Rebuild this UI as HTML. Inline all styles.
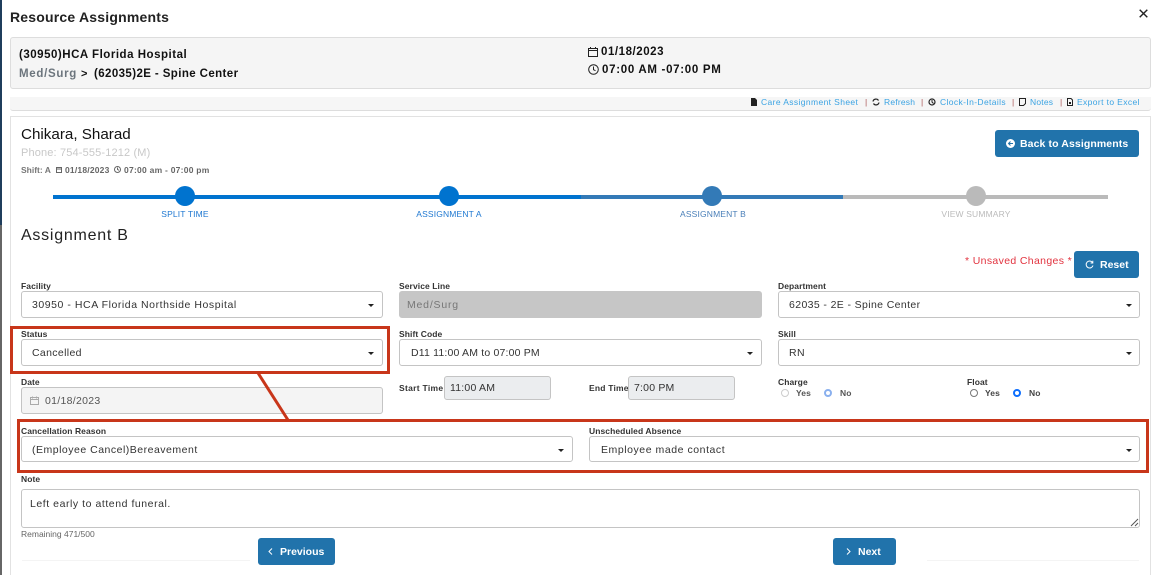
<!DOCTYPE html>
<html><head><meta charset="utf-8"><style>
html,body{margin:0;padding:0;width:1156px;height:575px;overflow:hidden;background:#fff}
body{position:relative;font-family:"Liberation Sans",sans-serif;color:#212529}
.a{position:absolute;box-sizing:border-box}
.t{position:absolute;white-space:nowrap;line-height:14px;height:14px}
.lb{font-size:8.5px;font-weight:700;color:#333;letter-spacing:.08px}
.in{position:absolute;box-sizing:border-box;border:1px solid #c4c4c4;border-radius:3px;background:#fff}
.v{font-size:10.5px;color:#333;letter-spacing:.45px}
.car{position:absolute;width:0;height:0;border-left:3px solid transparent;border-right:3px solid transparent;border-top:3px solid #222}
.btn{position:absolute;box-sizing:border-box;background:#2173ab;border-radius:3px;color:#fff;font-weight:700;font-size:10.5px;line-height:28px;white-space:nowrap}
.lk{color:#3aa3e3;font-size:8.5px;letter-spacing:.38px}
.sep{color:#a55;font-size:8.5px}
.st{font-size:8.5px;text-align:center;width:120px;letter-spacing:.15px}
.dot{position:absolute;width:20px;height:20px;border-radius:50%;top:186px}
.r{position:absolute;box-sizing:border-box;border:3px solid #c8361a}
.rd{position:absolute;box-sizing:border-box;width:8px;height:8px;border-radius:50%}
</style></head><body>
<div class="a" style="left:0;top:0;width:2px;height:225px;background:#1f3d5c"></div>
<div class="a" style="left:0;top:225px;width:2px;height:350px;background:#666"></div>

<div class="t" style="left:10px;top:10px;font-size:14px;font-weight:700;letter-spacing:.2px;color:#222">Resource Assignments</div>
<svg class="a" style="left:1139px;top:9px" width="9" height="9" viewBox="0 0 9 9"><path d="M.7.7L8.300 8.300M8.300.7L.7 8.300" stroke="#222" stroke-width="1.400" fill="none"/></svg>

<div class="a" style="left:10px;top:37px;width:1141px;height:52px;background:#f5f5f5;border:1px solid #ddd;border-radius:3px"></div>
<div class="t" style="left:19px;top:48px;font-size:11.500px;font-weight:700;letter-spacing:.52px;color:#111">(30950)HCA Florida Hospital</div>
<div class="t" style="left:19px;top:67px;font-size:11.500px;font-weight:700;letter-spacing:.7px;color:#6c757d">Med/Surg</div>
<div class="t" style="left:81px;top:67px;font-size:11px;font-weight:700;color:#111">&gt;</div>
<div class="t" style="left:94px;top:67px;font-size:11.500px;font-weight:700;letter-spacing:.4px;color:#111">(62035)2E - Spine Center</div>
<svg class="a" style="left:588px;top:46px" width="10" height="11" viewBox="0 0 10 11"><path d="M.5 2.500h9v8h-9zM.5 4.500h9M2.500 1v2M7.500 1v2" stroke="#222" stroke-width="1" fill="none"/></svg>
<div class="t" style="left:601px;top:45px;font-size:11.500px;font-weight:700;letter-spacing:.55px;color:#111">01/18/2023</div>
<svg class="a" style="left:588px;top:64px" width="11" height="11" viewBox="0 0 11 11"><circle cx="5.500" cy="5.500" r="4.800" stroke="#222" fill="none"/><path d="M5.500 2.500v3.200l2 1" stroke="#222" fill="none"/></svg>
<div class="t" style="left:602px;top:63px;font-size:11.500px;font-weight:700;letter-spacing:.7px;color:#111">07:00 AM -07:00 PM</div>

<div class="a" style="left:10px;top:97px;width:1141px;height:14px;background:#f6f6f6;border-bottom:1px solid #ddd;border-radius:0 0 3px 3px"></div>
<svg class="a" style="left:751px;top:98px" width="6" height="8" viewBox="0 0 6 8"><path d="M0 0h4l2 2v6H0z" fill="#222"/></svg>
<div class="t lk" style="left:761px;top:95px">Care Assignment Sheet</div><div class="t sep" style="left:865px;top:95px">|</div>
<svg class="a" style="left:872px;top:98px" width="8" height="8" viewBox="0 0 8 8"><path d="M1 3.500A3 3 0 0 1 6.500 2.500M7 4.500A3 3 0 0 1 1.500 5.500" stroke="#222" stroke-width="1.200" fill="none"/></svg>
<div class="t lk" style="left:884px;top:95px;letter-spacing:.2px">Refresh</div><div class="t sep" style="left:921px;top:95px">|</div>
<svg class="a" style="left:928px;top:98px" width="8" height="8" viewBox="0 0 8 8"><circle cx="4" cy="4" r="3" stroke="#222" stroke-width="1.200" fill="none"/><path d="M4 2v2l1.500 1.500" stroke="#222" fill="none"/></svg>
<div class="t lk" style="left:940px;top:95px">Clock-In-Details</div><div class="t sep" style="left:1012px;top:95px">|</div>
<svg class="a" style="left:1019px;top:98px" width="7" height="8" viewBox="0 0 7 8"><path d="M.5.5h6v5l-2 2h-4z" stroke="#222" fill="none"/></svg>
<div class="t lk" style="left:1030px;top:95px;letter-spacing:.2px">Notes</div><div class="t sep" style="left:1060px;top:95px">|</div>
<svg class="a" style="left:1067px;top:98px" width="6" height="8" viewBox="0 0 6 8"><path d="M.5.5h3.500l1.500 1.500v5.500h-5z" stroke="#222" fill="none"/><path d="M2 4h2v2H2z" fill="#222"/></svg>
<div class="t lk" style="left:1077px;top:95px">Export to Excel</div>

<div class="a" style="left:10px;top:116px;width:1141px;height:470px;background:#fff;border:1px solid #e2e2e2"></div>

<div class="t" style="left:21px;top:128px;font-size:15.200px;color:#111">Chikara, Sharad</div>
<div class="t" style="left:21px;top:146px;font-size:11px;color:#c8c8c8;letter-spacing:.15px">Phone: 754-555-1212 (M)</div>
<div class="t" style="left:21px;top:163px;font-size:8.500px;font-weight:700;color:#777">Shift: A</div>
<svg class="a" style="left:56px;top:166px" width="6" height="7" viewBox="0 0 6 7"><path d="M.5 1.500h5v5h-5zM.5 3h5" stroke="#666" fill="none"/></svg>
<div class="t" style="left:65px;top:163px;font-size:8.500px;font-weight:700;color:#666;letter-spacing:.2px">01/18/2023</div>
<svg class="a" style="left:114px;top:166px" width="7" height="7" viewBox="0 0 7 7"><circle cx="3.500" cy="3.500" r="3" stroke="#666" fill="none"/><path d="M3.500 1.500v2l1.500.8" stroke="#666" fill="none"/></svg>
<div class="t" style="left:124px;top:163px;font-size:8.500px;font-weight:700;color:#666;letter-spacing:.25px">07:00 am - 07:00 pm</div>

<div class="btn" style="left:995px;top:130px;width:144px;height:27px;padding-left:25px;letter-spacing:.1px">Back to Assignments</div>
<svg class="a" style="left:1006px;top:139px" width="9" height="9" viewBox="0 0 9 9"><circle cx="4.500" cy="4.500" r="4.500" fill="#fff"/><path d="M7 4.500H2.500M4.500 2.500l-2 2 2 2" stroke="#2173ab" fill="none"/></svg>

<div class="a" style="left:53px;top:195px;width:528px;height:4px;background:#0073cf"></div>
<div class="a" style="left:581px;top:195px;width:262px;height:4px;background:#337ab7"></div>
<div class="a" style="left:843px;top:195px;width:265px;height:4px;background:#bababa"></div>
<div class="dot" style="left:175px;background:#0073cf"></div>
<div class="dot" style="left:439px;background:#0073cf"></div>
<div class="dot" style="left:702px;background:#337ab7"></div>
<div class="dot" style="left:966px;background:#bababa"></div>
<div class="t st" style="left:125px;top:207px;color:#1f78d1">SPLIT TIME</div>
<div class="t st" style="left:389px;top:207px;color:#1f78d1">ASSIGNMENT A</div>
<div class="t st" style="left:653px;top:207px;color:#4a7fb8">ASSIGNMENT B</div>
<div class="t st" style="left:916px;top:207px;color:#bbb">VIEW SUMMARY</div>

<div class="t" style="left:21px;top:229px;font-size:16px;letter-spacing:.75px;color:#222">Assignment B</div>
<div class="t" style="left:965px;top:254px;font-size:10.500px;color:#e2333f;letter-spacing:.35px">* Unsaved Changes *</div>
<div class="btn" style="left:1074px;top:251px;width:65px;height:27px;padding-left:26px">Reset</div>
<svg class="a" style="left:1085px;top:260px" width="9" height="9" viewBox="0 0 9 9"><path d="M7.500 2.500A3.500 3.500 0 1 0 8 5.500M7.800 .8v2.200H5.600" stroke="#fff" fill="none"/></svg>

<div class="t lb" style="left:21px;top:279px">Facility</div>
<div class="in" style="left:21px;top:291px;width:362px;height:27px"></div>
<div class="t v" style="left:32px;top:298px;letter-spacing:.55px">30950 - HCA Florida Northside Hospital</div><div class="car" style="left:368px;top:304px"></div>
<div class="t lb" style="left:399px;top:279px">Service Line</div>
<div class="in" style="left:399px;top:291px;width:363px;height:27px;background:#c6c6c6;border-color:#c6c6c6"></div>
<div class="t v" style="left:407px;top:298px;color:#777;letter-spacing:.8px">Med/Surg</div>
<div class="t lb" style="left:778px;top:279px">Department</div>
<div class="in" style="left:778px;top:291px;width:362px;height:27px"></div>
<div class="t v" style="left:789px;top:298px;letter-spacing:.38px">62035 - 2E - Spine Center</div><div class="car" style="left:1126px;top:304px"></div>

<div class="t lb" style="left:21px;top:327px">Status</div>
<div class="in" style="left:21px;top:339px;width:362px;height:27px"></div>
<div class="t v" style="left:32px;top:346px;letter-spacing:.35px">Cancelled</div><div class="car" style="left:368px;top:352px"></div>
<div class="t lb" style="left:399px;top:327px">Shift Code</div>
<div class="in" style="left:399px;top:339px;width:363px;height:27px"></div>
<div class="t v" style="left:411px;top:346px;letter-spacing:.18px">D11 11:00 AM to 07:00 PM</div><div class="car" style="left:747px;top:352px"></div>
<div class="t lb" style="left:778px;top:327px">Skill</div>
<div class="in" style="left:778px;top:339px;width:362px;height:27px"></div>
<div class="t v" style="left:789px;top:346px">RN</div><div class="car" style="left:1126px;top:352px"></div>

<div class="t lb" style="left:21px;top:375px">Date</div>
<div class="in" style="left:21px;top:387px;width:362px;height:27px;background:#f4f4f4"></div>
<svg class="a" style="left:30px;top:396px" width="9" height="9" viewBox="0 0 9 9"><path d="M.5 1.500h8v7h-8zM.5 3.500h8M2.500 .5v2M6.500 .5v2" stroke="#aaa" fill="none"/></svg>
<div class="t v" style="left:45px;top:394px;color:#555;letter-spacing:.3px">01/18/2023</div>
<div class="t lb" style="left:399px;top:381px;letter-spacing:.3px">Start Time</div>
<div class="in" style="left:444px;top:376px;width:107px;height:24px;background:#ebedef"></div>
<div class="t v" style="left:450px;top:381px;letter-spacing:.2px">11:00 AM</div>
<div class="t lb" style="left:589px;top:381px;letter-spacing:.2px">End Time</div>
<div class="in" style="left:628px;top:376px;width:107px;height:24px;background:#ebedef"></div>
<div class="t v" style="left:634px;top:381px;letter-spacing:.2px">7:00 PM</div>

<div class="t lb" style="left:778px;top:375px">Charge</div>
<div class="rd" style="left:781px;border:1px solid #ccc;top:389px"></div>
<div class="t lb" style="left:796px;top:386px;color:#555">Yes</div>
<div class="rd" style="left:824px;background:#fff;border:2.500px solid #8ab0ee;top:389px"></div>
<div class="t lb" style="left:840px;top:386px;color:#555">No</div>
<div class="t lb" style="left:967px;top:375px">Float</div>
<div class="rd" style="left:970px;border:1px solid #777;top:389px"></div>
<div class="t lb" style="left:985px;top:386px;color:#444">Yes</div>
<div class="rd" style="left:1013px;background:#fff;border:2.500px solid #0d6efd;top:389px"></div>
<div class="t lb" style="left:1029px;top:386px;color:#444">No</div>

<div class="t lb" style="left:21px;top:424px">Cancellation Reason</div>
<div class="in" style="left:21px;top:436px;width:552px;height:26px"></div>
<div class="t v" style="left:32px;top:443px;letter-spacing:.5px">(Employee Cancel)Bereavement</div><div class="car" style="left:558px;top:449px"></div>
<div class="t lb" style="left:589px;top:424px">Unscheduled Absence</div>
<div class="in" style="left:589px;top:436px;width:551px;height:26px"></div>
<div class="t v" style="left:601px;top:443px;letter-spacing:.55px">Employee made contact</div><div class="car" style="left:1126px;top:449px"></div>

<div class="r" style="left:10px;top:326px;width:380px;height:48px"></div>
<div class="r" style="left:17px;top:419px;width:1132px;height:54px"></div>
<svg class="a" style="left:255px;top:372px" width="36" height="50" viewBox="0 0 36 50"><path d="M3 1L33 48" stroke="#c8361a" stroke-width="3" fill="none"/></svg>

<div class="t lb" style="left:21px;top:472px">Note</div>
<div class="in" style="left:21px;top:489px;width:1119px;height:39px"></div>
<div class="t v" style="left:30px;top:497px;letter-spacing:.55px">Left early to attend funeral.</div>
<svg class="a" style="left:1130px;top:518px" width="9" height="9" viewBox="0 0 9 9"><path d="M1 8L8 1M5 8L8 5" stroke="#555" fill="none"/></svg>
<div class="t" style="left:21px;top:527px;font-size:8.500px;color:#666">Remaining 471/500</div>

<div class="a" style="left:22px;top:560px;width:228px;height:1px;background:#f4f4f4"></div>
<div class="a" style="left:927px;top:560px;width:212px;height:1px;background:#f4f4f4"></div>
<div class="btn" style="left:258px;top:538px;width:77px;height:27px;padding-left:22px">Previous</div>
<svg class="a" style="left:268px;top:548px" width="5" height="7" viewBox="0 0 5 7"><path d="M4 .5L1 3.500l3 3" stroke="#fff" fill="none"/></svg>
<div class="btn" style="left:833px;top:538px;width:63px;height:27px;padding-left:25px">Next</div>
<svg class="a" style="left:846px;top:548px" width="5" height="7" viewBox="0 0 5 7"><path d="M1 .5L4 3.500l-3 3" stroke="#fff" fill="none"/></svg>
</body></html>
